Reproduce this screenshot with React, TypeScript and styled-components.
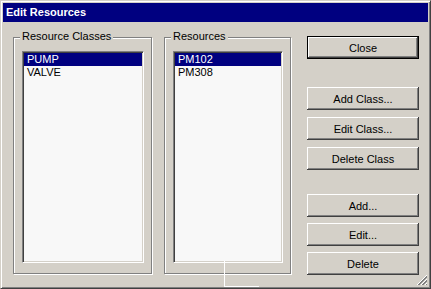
import React from 'react';
import styled, { createGlobalStyle } from 'styled-components';

const GlobalStyle = createGlobalStyle`
  html, body {
    margin: 0;
    padding: 0;
    background: #d4d0c8;
  }
  body {
    font-family: "Liberation Sans", Arial, sans-serif;
    font-size: 11px;
  }
`;

const Window = styled.div`
  position: relative;
  width: 431px;
  height: 289px;
  box-sizing: border-box;
  padding: 2px;
  background: #d4d0c8;
  border: 1px solid;
  border-color: #d4d0c8 #404040 #404040 #d4d0c8;
  box-shadow: inset 1px 1px 0 #fff, inset -1px -1px 0 #808080;
  display: flex;
  flex-direction: column;
`;

const TitleBar = styled.div`
  height: 19px;
  background: #000080;
  color: #fff;
  font-weight: bold;
  font-size: 11px;
  line-height: 19px;
  padding-left: 3px;
`;

const Body = styled.div`
  display: flex;
  align-items: flex-start;
  padding: 15px 0 0 10px;
`;

const GroupBox = styled.div<{ $width: number; $gap: number }>`
  position: relative;
  width: ${p => p.$width}px;
  height: 237px;
  margin-left: ${p => p.$gap}px;
  box-sizing: border-box;
  border: 1px solid #808080;
  box-shadow: 1px 1px 0 #fff, inset 1px 1px 0 #fff;
  padding: 13px 7px 10px 8px;
  display: flex;
`;

const Legend = styled.span`
  position: absolute;
  top: -8px;
  left: 6px;
  padding: 0 2px;
  line-height: 13px;
  background: #d4d0c8;
  color: #000;
`;

const ListBox = styled.ul`
  flex: 1;
  margin: 0;
  padding: 1px;
  list-style: none;
  background: #f8f8f8;
  border: 1px solid;
  border-color: #808080 #fff #fff #808080;
  box-shadow: inset 1px 1px 0 #404040, inset -1px -1px 0 #d4d0c8;
`;

const ListItem = styled.li<{ $selected?: boolean }>`
  height: 13px;
  line-height: 13px;
  padding-left: 3px;
  color: ${p => (p.$selected ? '#fff' : '#000')};
  background: ${p => (p.$selected ? '#000080' : 'transparent')};
  white-space: nowrap;
`;

const ButtonColumn = styled.div`
  display: flex;
  flex-direction: column;
  margin: -1px 0 0 16px;
`;

const Button = styled.button<{ $default?: boolean; $gap: number }>`
  width: 112px;
  height: 23px;
  margin-top: ${p => p.$gap}px;
  padding: 0;
  box-sizing: border-box;
  background: #d4d0c8;
  color: #000;
  font-family: "Liberation Sans", Arial, sans-serif;
  font-size: 11px;
  border: ${p => (p.$default ? '1px solid #000' : 'none')};
  box-shadow: ${p =>
    p.$default
      ? 'inset -1px -1px 0 #404040, inset 1px 1px 0 #fff, inset -2px -2px 0 #808080'
      : 'inset -1px -1px 0 #404040, inset 1px 1px 0 #fff, inset -2px -2px 0 #808080'};
  cursor: default;

  &:focus {
    outline: none;
  }
`;

const SizeGrip = styled.svg`
  position: absolute;
  right: 2px;
  bottom: 2px;
`;

const GlitchLine = styled.div<{ $x: number; $y: number; $w: number; $h: number }>`
  position: absolute;
  left: ${p => p.$x}px;
  top: ${p => p.$y}px;
  width: ${p => p.$w}px;
  height: ${p => p.$h}px;
  background: #fff;
`;

const classes = ['PUMP', 'VALVE'];
const resources = ['PM102', 'PM308'];

const buttons = [
  { label: 'Close', gap: 0, isDefault: true },
  { label: 'Add Class...', gap: 28 },
  { label: 'Edit Class...', gap: 7 },
  { label: 'Delete Class', gap: 7 },
  { label: 'Add...', gap: 24 },
  { label: 'Edit...', gap: 6 },
  { label: 'Delete', gap: 6 },
];

const App: React.FC = () => {
  return (
    <>
      <GlobalStyle />
      <Window>
        <TitleBar>Edit Resources</TitleBar>
        <Body>
          <GroupBox $width={139} $gap={0}>
            <Legend>Resource Classes</Legend>
            <ListBox>
              {classes.map((c, i) => (
                <ListItem key={c} $selected={i === 0}>
                  {c}
                </ListItem>
              ))}
            </ListBox>
          </GroupBox>
          <GroupBox $width={127} $gap={12}>
            <Legend>Resources</Legend>
            <ListBox>
              {resources.map((r, i) => (
                <ListItem key={r} $selected={i === 0}>
                  {r}
                </ListItem>
              ))}
            </ListBox>
          </GroupBox>
          <ButtonColumn>
            {buttons.map(b => (
              <Button key={b.label} type="button" $gap={b.gap} $default={b.isDefault}>
                {b.label}
              </Button>
            ))}
          </ButtonColumn>
        </Body>
        <GlitchLine $x={223} $y={260} $w={1} $h={26} />
        <GlitchLine $x={223} $y={285} $w={35} $h={1} />
        <SizeGrip width="12" height="12" viewBox="0 0 12 12">
          <path d="M11 1 L1 11 M11 5 L5 11 M11 9 L9 11" stroke="#fff" strokeWidth="1" />
          <path d="M11 2 L2 11 M11 3 L3 11 M11 6 L6 11 M11 7 L7 11 M11 10 L10 11" stroke="#808080" strokeWidth="1" />
        </SizeGrip>
      </Window>
    </>
  );
};

export default App;
